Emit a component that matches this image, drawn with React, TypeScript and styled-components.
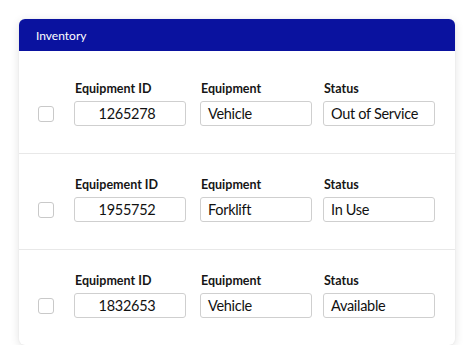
import React from "react";
import styled, { createGlobalStyle } from "styled-components";

const GlobalStyle = createGlobalStyle`
  html, body {
    margin: 0;
    padding: 0;
    background: #ffffff;
  }
  body {
    font-family: Lato, "Open Sans", "Liberation Sans", sans-serif;
    color: #141414;
  }
`;

const Page = styled.div`
  padding: 19px 0 0 19px;
`;

const Card = styled.div`
  width: 436px;
  background: #ffffff;
  border-radius: 6px;
  overflow: hidden;
  box-shadow: 0 2px 10px rgba(0, 0, 0, 0.12), 0 0 2px rgba(0, 0, 0, 0.06);
`;

const Header = styled.div`
  height: 32px;
  display: flex;
  align-items: center;
  padding-left: 17px;
  background: #0a129f;
  color: #ffffff;
  font-size: 12px;
`;

const Row = styled.div<{ $first?: boolean }>`
  display: flex;
  align-items: flex-end;
  padding: ${(p) => (p.$first ? "30px" : "23px")} 0 27px 19px;
  border-top: ${(p) => (p.$first ? "none" : "1px solid #e8e8e8")};
`;

const CheckCell = styled.div`
  width: 36px;
  height: 25px;
  display: flex;
  align-items: center;
`;

const Checkbox = styled.div`
  width: 16px;
  height: 16px;
  box-sizing: border-box;
  border: 1px solid #c9c9c9;
  border-radius: 3px;
  background: #ffffff;
`;

const Field = styled.div<{ $width: number }>`
  width: ${(p) => p.$width}px;
  display: flex;
  flex-direction: column;
  gap: 5px;
`;

const Label = styled.div`
  font-size: 12.5px;
  line-height: 15px;
  font-weight: 700;
  color: #161616;
  padding-left: 1px;
`;

const ValueBox = styled.div<{ $center?: boolean }>`
  width: 112px;
  height: 25px;
  box-sizing: border-box;
  border: 1px solid #cfcfcf;
  border-radius: 3px;
  padding: ${(p) => (p.$center ? "0 13px 0 7px" : "0 7px")};
  display: flex;
  align-items: center;
  justify-content: ${(p) => (p.$center ? "center" : "flex-start")};
  font-size: 14.5px;
  letter-spacing: -0.3px;
  color: #111111;
  background: #ffffff;
  white-space: nowrap;
`;

type Item = { idLabel: string; id: string; equipment: string; status: string };

const items: Item[] = [
  { idLabel: "Equipment ID", id: "1265278", equipment: "Vehicle", status: "Out of Service" },
  { idLabel: "Equipement ID", id: "1955752", equipment: "Forklift", status: "In Use" },
  { idLabel: "Equipment ID", id: "1832653", equipment: "Vehicle", status: "Available" },
];

export default function App() {
  return (
    <>
      <GlobalStyle />
      <Page>
        <Card>
          <Header>Inventory</Header>
          {items.map((it, i) => (
            <Row key={i} $first={i === 0}>
              <CheckCell>
                <Checkbox />
              </CheckCell>
              <Field $width={126}>
                <Label>{it.idLabel}</Label>
                <ValueBox $center>{it.id}</ValueBox>
              </Field>
              <Field $width={123}>
                <Label>Equipment</Label>
                <ValueBox>{it.equipment}</ValueBox>
              </Field>
              <Field $width={112}>
                <Label>Status</Label>
                <ValueBox>{it.status}</ValueBox>
              </Field>
            </Row>
          ))}
        </Card>
      </Page>
    </>
  );
}
